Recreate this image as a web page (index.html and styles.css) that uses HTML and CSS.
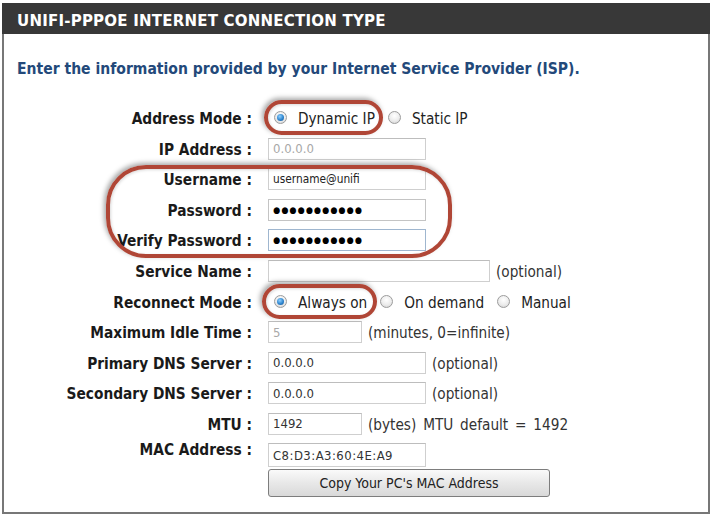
FILE: index.html
```html
<!DOCTYPE html>
<html>
<head>
<meta charset="utf-8">
<title>UNIFI-PPPOE Internet Connection Type</title>
<link rel="stylesheet" href="styles.css">
</head>
<body>
<div class="panel">
  <div class="title">UNIFI-PPPOE INTERNET CONNECTION TYPE</div>
  <p class="intro">Enter the information provided by your Internet Service Provider (ISP).</p>
  <div class="form">
    <div class="label">Address Mode :</div>
    <div class="ctl">
      <span class="radio on"></span><span class="opt">Dynamic IP</span>
      <span class="radio next"></span><span class="opt">Static IP</span>
    </div>

    <div class="label">IP Address :</div>
    <div class="ctl"><div class="field w158 dis">0.0.0.0</div></div>

    <div class="label">Username :</div>
    <div class="ctl"><div class="field w158 user">username@unifi</div></div>

    <div class="label">Password :</div>
    <div class="ctl"><div class="field w158 pw">●●●●●●●●●●●</div></div>

    <div class="label">Verify Password :</div>
    <div class="ctl"><div class="field w158 pw focus">●●●●●●●●●●●</div></div>

    <div class="label">Service Name :</div>
    <div class="ctl"><div class="field w222"></div><span class="note">(optional)</span></div>

    <div class="label">Reconnect Mode :</div>
    <div class="ctl">
      <span class="radio on"></span><span class="opt">Always on</span>
      <span class="radio next"></span><span class="opt">On demand</span>
      <span class="radio next"></span><span class="opt">Manual</span>
    </div>

    <div class="label">Maximum Idle Time :</div>
    <div class="ctl"><div class="field w94 dis">5</div><span class="note">(minutes, 0=infinite)</span></div>

    <div class="label">Primary DNS Server :</div>
    <div class="ctl"><div class="field w158">0.0.0.0</div><span class="note">(optional)</span></div>

    <div class="label">Secondary DNS Server :</div>
    <div class="ctl"><div class="field w158">0.0.0.0</div><span class="note">(optional)</span></div>

    <div class="label">MTU :</div>
    <div class="ctl"><div class="field w94">1492</div><span class="note wide">(bytes) MTU default = 1492</span></div>

    <div class="label top">MAC Address :</div>
    <div class="ctl top"><div class="field w158 mac">C8:D3:A3:60:4E:A9</div></div>

    <div></div>
    <div class="ctl btnrow"><button class="btn" type="button">Copy Your PC's MAC Address</button></div>
  </div>

  <div class="mark m1"></div>
  <div class="mark m2"></div>
  <div class="mark m3"></div>
</div>
</body>
</html>
```

FILE: styles.css
```css
* { box-sizing: border-box; }

body {
  margin: 0;
  background: #fff;
  font-family: "DejaVu Sans", Tahoma, Verdana, sans-serif;
  font-stretch: condensed;
  color: #222;
}

.panel {
  position: relative;
  margin: 3px 0 0 2px;
  width: 708px;
  height: 511px;
  border: 2px solid #777;
  border-top: none;
}

.title {
  margin: 0 -2px;
  height: 31px;
  background: #383838;
  color: #fff;
  font-weight: bold;
  font-size: 15px;
  font-stretch: normal;
  letter-spacing: 0.22px;
  line-height: 37px;
  padding-left: 15px;
  white-space: nowrap;
  overflow: hidden;
}

.intro {
  margin: 26px 0 0 13px;
  color: #23497a;
  font-weight: bold;
  font-size: 15.55px;
  line-height: 18px;
  white-space: nowrap;
}

.form {
  margin-top: 24.7px;
  display: grid;
  grid-template-columns: 248px 1fr;
  column-gap: 16px;
  grid-auto-rows: 30.6px;
  align-items: center;
}

.label {
  text-align: right;
  font-weight: bold;
  font-size: 15.3px;
  line-height: 17px;
  padding-top: 3px;
  white-space: nowrap;
  color: #1a1a1a;
}

.ctl {
  display: flex;
  align-items: center;
  font-size: 15.2px;
  white-space: nowrap;
}

.label.top, .ctl.top { align-self: start; }
.label.top { margin-top: 0; }
.ctl.top { margin-top: 4px; }
.btnrow { align-self: start; margin-top: -1px; }

.field {
  height: 22px;
  border: 1px solid #cfcfcf;
  border-top-color: #bdbdbd;
  background: #fff;
  padding: 0 4px;
  display: flex;
  align-items: center;
  font-size: 13px;
  color: #333;
  overflow: hidden;
}

.w158 { width: 158px; }
.w222 { width: 222px; }
.w94 { width: 94px; }

.field.dis { color: #a8a8a8; }
.field.user { font-size: 11.8px; color: #222; }
.field.pw {
  font-size: 9px;
  letter-spacing: 1.1px;
  color: #000;
  border-color: #c4c4c4;
}
.field.focus { border-color: #9fb6cf; }
.field.mac { height: 24px; font-size: 13px; letter-spacing: 0.45px; }

.note, .opt {
  padding-top: 3px;
  line-height: 17px;
}

.note {
  margin-left: 6px;
  color: #333;
}
.note.wide { word-spacing: 2.5px; }

.radio {
  flex: none;
  position: relative;
  width: 13px;
  height: 13px;
  border-radius: 50%;
  border: 1px solid #9c9c9c;
  background: radial-gradient(circle at 50% 35%, #ffffff 0%, #ececec 55%, #cfcfcf 100%);
  margin: 0 11px 0 6px;
}
.radio.next { margin-left: 13px; }
.radio.on::after {
  content: "";
  position: absolute;
  left: 2px;
  top: 2px;
  width: 7px;
  height: 7px;
  border-radius: 50%;
  background: radial-gradient(circle at 40% 35%, #8fd0ff 0%, #2f86cf 55%, #17508c 100%);
}

.opt { color: #222; }

.btn {
  width: 282px;
  height: 28px;
  border: 1px solid #7d7d7d;
  border-radius: 3px;
  background: linear-gradient(#fafafa, #e8e8e8 50%, #d9d9d9);
  font-family: inherit;
  font-stretch: condensed;
  font-size: 14px;
  color: #222;
  padding: 0;
}

.mark {
  position: absolute;
  border: 4px solid #b04636;
  box-shadow: -2px -2px 5px rgba(0, 0, 0, 0.35), inset 1px 1px 3px rgba(0, 0, 0, 0.15);
}
.m1 { left: 260px; top: 97px; width: 119px; height: 35px; border-radius: 18px; }
.m2 { left: 102px; top: 162px; width: 346px; height: 93px; border-radius: 40px; }
.m3 { left: 258px; top: 281px; width: 115px; height: 35px; border-radius: 18px; }
```
